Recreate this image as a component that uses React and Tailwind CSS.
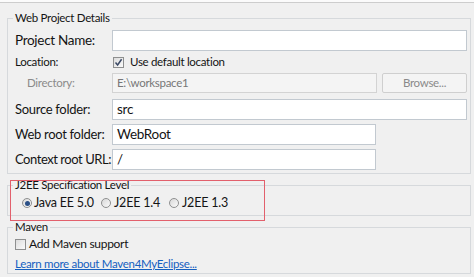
function Check({ checked }) {
  return (
    <span className="inline-flex w-[11px] h-[11px] shrink-0 items-center justify-center border border-[#8e8f8f] bg-gradient-to-br from-[#dcdcdc] to-[#fbfbfb]">
      {checked && (
        <svg width="9" height="9" viewBox="0 0 9 9">
          <path d="M1.5 4.5 L3.6 7 L7.6 1.2" fill="none" stroke="#3c4a66" strokeWidth="1.5" />
        </svg>
      )}
    </span>
  );
}

function Radio({ checked }) {
  return (
    <span className="inline-flex w-[10px] h-[10px] shrink-0 items-center justify-center rounded-full border border-[#8e8f8f] bg-gradient-to-br from-[#d8d8d8] to-[#fbfbfb]">
      {checked && <span className="w-[5px] h-[5px] rounded-full bg-[#2a4f86]" />}
    </span>
  );
}

function TextInput({ value }) {
  return (
    <div className="h-full flex items-center border border-[#c2c9d0] bg-white px-[4px] text-[13.5px] tracking-[-0.3px]">
      {value}
    </div>
  );
}

export default function App() {
  return (
    <div className="relative w-[474px] h-[277px] overflow-hidden bg-[#f0f0f0] font-['Lato',sans-serif] text-[#141414] whitespace-nowrap">
      <div className="h-[2px] bg-[#fbfbfb]" />
      <div className="h-[1px] bg-[#cdcdcd]" />

      {/* Web Project Details */}
      <fieldset className="ml-[7px] mt-[7px] w-[464px] border border-[#d6d9dc] pl-[7px] pr-[3px] pb-[3px]">
        <legend className="-ml-[2px] px-[2px] h-[16px] leading-[16px] text-[11.5px] tracking-[-0.3px]">Web Project Details</legend>

        <div className="mt-[4px] h-[21px] flex items-center">
          <div className="w-[97px] text-[13.5px] tracking-[-0.3px]">Project Name:</div>
          <div className="flex-1 h-full">
            <TextInput value="" />
          </div>
        </div>

        <div className="h-[22px] flex items-center text-[11.5px] tracking-[-0.3px]">
          <div className="w-[98px]">Location:</div>
          <Check checked />
          <span className="ml-[6px]">Use default location</span>
        </div>

        <div className="h-[20px] flex items-center text-[11.5px] tracking-[-0.3px]">
          <div className="w-[97px] pl-[12px] text-[#8b8b8b]">Directory:</div>
          <div className="w-[265px] h-full flex items-center border border-[#d3d3d3] bg-[#f4f4f4] px-[4px] text-[#777]">
            E:\workspace1
          </div>
          <div className="ml-[5px] w-[85px] h-full flex items-center justify-center border border-[#cfcfcf] bg-[#f4f4f4] text-[#8a8a8a] rounded-[2px]">
            Browse...
          </div>
        </div>

        <div className="mt-[6px] h-[21px] flex items-center">
          <div className="w-[97px] text-[13px] tracking-[-0.3px]">Source folder:</div>
          <div className="flex-1 h-full">
            <TextInput value="src" />
          </div>
        </div>

        <div className="mt-[4px] h-[21px] flex items-center">
          <div className="w-[97px] text-[13px] tracking-[-0.3px]">Web root folder:</div>
          <div className="w-[264px] h-full">
            <TextInput value="WebRoot" />
          </div>
        </div>

        <div className="mt-[4px] h-[21px] flex items-center">
          <div className="w-[97px] text-[13px] tracking-[-0.45px]">Context root URL:</div>
          <div className="w-[264px] h-full">
            <TextInput value="/" />
          </div>
        </div>
      </fieldset>

      {/* J2EE Specification Level */}
      <fieldset className="ml-[7px] mt-[3px] w-[464px] border border-[#d6d9dc] pl-[7px] pb-[2px]">
        <legend className="-ml-[2px] px-[2px] h-[16px] leading-[16px] text-[11.5px] tracking-[-0.3px]">J2EE Specification Level</legend>
        <div className="h-[20px] flex items-center text-[12.5px] tracking-[-0.2px]">
          <div className="ml-[7px] w-[79px] shrink-0 flex items-center">
            <Radio checked />
            <span className="ml-[2px]">Java EE 5.0</span>
          </div>
          <div className="w-[68px] shrink-0 flex items-center">
            <Radio />
            <span className="ml-[3px]">J2EE 1.4</span>
          </div>
          <div className="flex items-center">
            <Radio />
            <span className="ml-[3px]">J2EE 1.3</span>
          </div>
        </div>
      </fieldset>

      {/* Maven */}
      <fieldset className="ml-[7px] mt-[3px] w-[464px] border border-[#d6d9dc] pl-[7px]">
        <legend className="-ml-[2px] px-[2px] h-[16px] leading-[16px] text-[11.5px] tracking-[-0.3px]">Maven</legend>
        <div className="h-[18px] flex items-center">
          <Check />
          <span className="ml-[3px] text-[12px] tracking-[-0.3px]">Add Maven support</span>
        </div>
        <div className="mt-[2px] h-[18px] flex items-center text-[11.5px] tracking-[-0.3px] text-[#1560c0] underline">
          Learn more about Maven4MyEclipse...
        </div>
      </fieldset>

      {/* annotation box */}
      <div className="absolute left-[10px] top-[180px] w-[255px] h-[41px] border border-[#e2606c]" />
    </div>
  );
}
